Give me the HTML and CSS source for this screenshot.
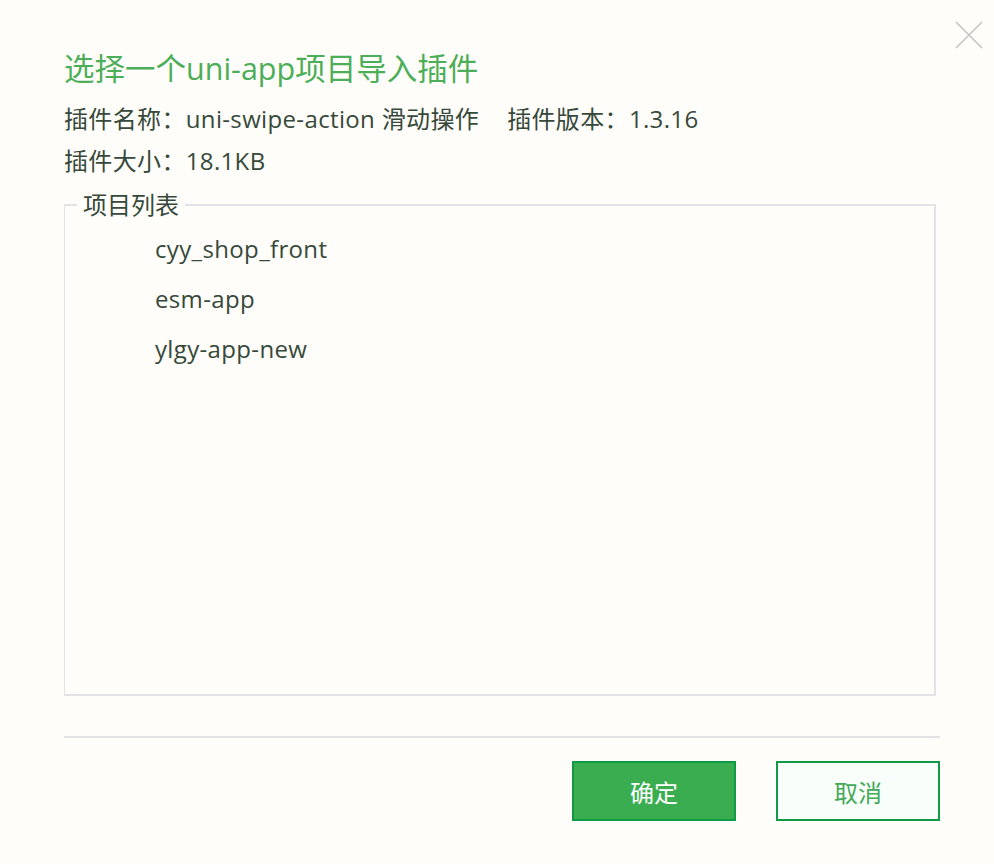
FILE: index.html
```html
<!DOCTYPE html>
<html lang="zh-CN">
<head>
<meta charset="utf-8">
<title>选择一个uni-app项目导入插件</title>
<link rel="stylesheet" href="styles.css">
</head>
<body>
<div class="dialog">
  <button class="close" aria-label="关闭">
    <svg width="28" height="28" viewBox="0 0 28 28"><path d="M1 1 L27 27 M27 1 L1 27" stroke="#c4c4c4" stroke-width="1.6" fill="none"/></svg>
  </button>
  <h1 class="title">选择一个uni-app项目导入插件</h1>
  <div class="info">插件名称：uni-swipe-action 滑动操作<span class="gap"></span>插件版本：1.3.16</div>
  <div class="info">插件大小：18.1KB</div>
  <fieldset class="projects">
    <legend>项目列表</legend>
    <ul class="list">
      <li>cyy_shop_front</li>
      <li>esm-app</li>
      <li>ylgy-app-new</li>
    </ul>
  </fieldset>
  <div class="sep"></div>
  <div class="actions">
    <button class="btn primary">确定</button>
    <button class="btn secondary">取消</button>
  </div>
</div>
</body>
</html>
```
FILE: styles.css
```css
html, body {
  margin: 0;
  padding: 0;
  background: #fffdf9;
}
body {
  font-family: "Open Sans", "Noto Sans CJK SC", sans-serif;
  color: #36493b;
}
.dialog {
  position: relative;
  padding: 48px 54px 0 64px;
}
.close {
  position: absolute;
  top: 21px;
  left: 955px;
  width: 28px;
  height: 28px;
  padding: 0;
  border: 0;
  background: transparent;
}
.close svg { display: block; }
.title {
  margin: 0;
  font-size: 30.5px;
  line-height: 40px;
  font-weight: normal;
  color: #4cae58;
}
.info {
  font-size: 24px;
  line-height: 42px;
  letter-spacing: 0.35px;
}
.title + .info { margin-top: 10px; }
.gap { display: inline-block; width: 28px; }
.projects {
  margin: 11px 4px 0 0;
  padding: 0 0 0 12px;
  border: 2px solid #e2e2e7;
  border-left-width: 1px;
}
.projects legend {
  font-size: 24px;
  line-height: 24px;
  padding: 0 6px;
}
.list {
  list-style: none;
  margin: 7px 0 0;
  padding: 0 0 0 78px;
  height: 470px;
  font-size: 24px;
  line-height: 50px;
  letter-spacing: 0.35px;
}
.sep {
  margin-top: 40px;
  height: 2px;
  background: #e2e2e2;
}
.actions {
  display: flex;
  justify-content: flex-end;
  gap: 40px;
  margin-top: 23px;
}
.btn {
  width: 164px;
  height: 60px;
  font-family: "Open Sans", "Noto Sans CJK SC", sans-serif;
  font-size: 24px;
  border: 2px solid #0f9a45;
  padding: 0;
}
.primary {
  background: #3aad50;
  color: #ffffff;
}
.secondary {
  background: #f8fffb;
  color: #45a95a;
}
```
